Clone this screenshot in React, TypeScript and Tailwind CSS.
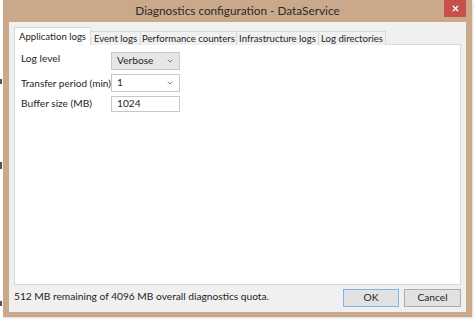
import { X, ChevronDown } from 'lucide-react';

const tabs = [
  { label: 'Application logs', w: 'w-[77px]' },
  { label: 'Event logs', w: 'w-[50px]' },
  { label: 'Performance counters', w: 'w-[96px]' },
  { label: 'Infrastructure logs', w: 'w-[82px]' },
  { label: 'Log directories', w: 'w-[67px]' },
];

function Select({ value, readOnly = false }: { value: string; readOnly?: boolean }) {
  return (
    <div
      className={
        'w-[69px] h-[18px] shrink-0 border flex items-center justify-between pl-[5px] pr-[5px] ' +
        (readOnly ? 'bg-[#e6e6e6] border-[#c8c8c8]' : 'bg-white border-[#c8c8c8]')
      }
    >
      <span>{value}</span>
      <ChevronDown className="w-[8px] h-[8px] text-[#666]" strokeWidth={2.5} />
    </div>
  );
}

export default function App() {
  return (
    <div
      className="w-[474px] h-[321px] bg-white flex overflow-hidden text-[10.2px] text-[#1e1e1e] whitespace-nowrap"
      style={{ fontFamily: 'Lato, "Noto Sans", sans-serif' }}
    >
      {/* scraps of the window underneath */}
      <div className="w-[3px] flex flex-col items-start">
        <div className="mt-[79px] w-[2px] h-[5px] bg-[#555]" />
        <div className="mt-[78px] w-[2px] h-[7px] bg-[#555]" />
        <div className="mt-[132px] w-[2px] h-[5px] bg-[#555]" />
      </div>

      {/* dialog */}
      <div className="w-[469px] h-[317px] bg-[#c9a98a] flex flex-col px-[6px] pb-[5px] shadow-[1px_1px_2px_rgba(0,0,0,0.15)]">
        {/* title bar */}
        <div className="h-[22px] flex items-start">
          <div className="flex-1 text-center text-[11.8px] text-[#2b2b2b] leading-[22px] pl-[22px]">
            Diagnostics configuration - DataService
          </div>
          <div className="w-[22px] h-[17px] bg-[#c7504c] flex items-center justify-center">
            <X className="w-[9px] h-[9px] text-white" strokeWidth={3.5} />
          </div>
        </div>

        {/* body */}
        <div className="flex-1 bg-[#f0f0f0] flex flex-col px-[5px] pt-[5px] pb-[5px]">
          {/* tabs */}
          <div className="flex items-end h-[18px] relative z-10 text-[9.6px]">
            {tabs.map((t, i) =>
              i === 0 ? (
                <div
                  key={t.label}
                  className={t.w + ' h-[18px] bg-white border border-b-0 border-[#d9d9d9] flex items-center justify-center leading-none'}
                >
                  {t.label}
                </div>
              ) : (
                <div
                  key={t.label}
                  className={t.w + ' h-[14px] bg-[#f0f0f0] border border-l-0 border-b-0 border-[#d9d9d9] flex items-center justify-center leading-none'}
                >
                  {t.label}
                </div>
              )
            )}
          </div>

          {/* tab panel */}
          <div className="h-[241px] bg-white border border-[#d9d9d9] -mt-px px-[6px] pt-[7px] flex flex-col gap-[4px]">
            <div className="flex items-center">
              <span className="w-[90px] shrink-0 -mt-[4px]">Log level</span>
              <Select value="Verbose" readOnly />
            </div>
            <div className="flex items-center">
              <span className="w-[90px] shrink-0 text-[10px]">Transfer period (min)</span>
              <Select value="1" />
            </div>
            <div className="flex items-center">
              <span className="w-[90px] shrink-0">Buffer size (MB)</span>
              <div className="w-[69px] h-[16px] border border-[#c8c8c8] bg-white flex items-center pl-[5px]">
                1024
              </div>
            </div>
          </div>

          {/* footer */}
          <div className="flex-1 flex items-center">
            <span className="flex-1 pt-[2px]">
              512 MB remaining of 4096 MB overall diagnostics quota.
            </span>
            <div className="flex gap-[5px] pt-[4px]">
              <button className="w-[56px] h-[18px] bg-[#e1e1e1] border border-[#7eb4ea] flex items-center justify-center">
                OK
              </button>
              <button className="w-[57px] h-[18px] bg-[#e1e1e1] border border-[#adadad] flex items-center justify-center">
                Cancel
              </button>
            </div>
          </div>
        </div>
      </div>
    </div>
  );
}
